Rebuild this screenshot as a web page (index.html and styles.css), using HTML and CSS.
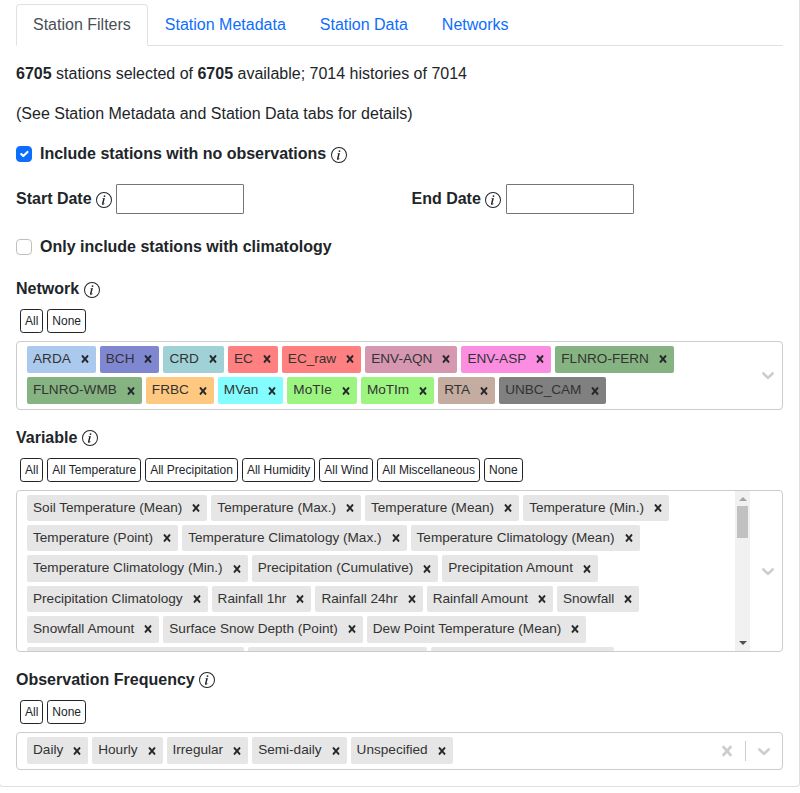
FILE: index.html
```html
<!DOCTYPE html>
<html lang="en">
<head>
<meta charset="utf-8">
<title>Station Filters</title>
<link rel="stylesheet" href="styles.css">
</head>
<body>
<svg class="sprite" width="0" height="0" aria-hidden="true">
  <symbol id="info" viewBox="0 0 16 16"><path d="M8 15A7 7 0 1 1 8 1a7 7 0 0 1 0 14zm0 1A8 8 0 1 0 8 0a8 8 0 0 0 0 16z"/><circle cx="8.5" cy="4.1" r=".95"/><path d="M6.1 6.4 8.9 6 7.6 11.3c-.15.7.3.7 1.2-.1l.2.3c-.8.9-1.5 1.3-2.2 1.3-.8 0-1-.6-.8-1.4l1-4c.1-.5 0-.6-.8-.7z"/></symbol>
  <symbol id="cross" viewBox="0 0 20 20"><path stroke="currentColor" stroke-width=".5" d="M14.348 14.849c-0.469 0.469-1.229 0.469-1.697 0l-2.651-3.030-2.651 3.029c-0.469 0.469-1.229 0.469-1.697 0-0.469-0.469-0.469-1.229 0-1.697l2.758-3.15-2.759-3.152c-0.469-0.469-0.469-1.228 0-1.697s1.228-0.469 1.697 0l2.652 3.031 2.651-3.031c0.469-0.469 1.228-0.469 1.697 0s0.469 1.229 0 1.697l-2.758 3.152 2.758 3.15c0.469 0.469 0.469 1.229 0 1.698z"/></symbol>
  <symbol id="chevron" viewBox="0 0 20 20"><path stroke="currentColor" stroke-width=".3" d="M4.516 7.548c0.436-0.446 1.043-0.481 1.576 0l3.908 3.747 3.908-3.747c0.533-0.481 1.141-0.446 1.574 0 0.436 0.445 0.408 1.197 0 1.615-0.406 0.418-4.695 4.502-4.695 4.502-0.217 0.223-0.502 0.335-0.787 0.335s-0.57-0.112-0.789-0.335c0 0-4.287-4.084-4.695-4.502s-0.436-1.17 0-1.615z"/></symbol>
</svg>
<main class="card">
  <nav class="tabs">
    <a class="tab active">Station Filters</a>
    <a class="tab">Station Metadata</a>
    <a class="tab">Station Data</a>
    <a class="tab">Networks</a>
  </nav>
  <p><b>6705</b> stations selected of <b>6705</b> available; 7014 histories of 7014</p>
  <p>(See Station Metadata and Station Data tabs for details)</p>
  <div class="check">
    <span class="box checked"><svg viewBox="0 0 20 20"><path d="m6 10 3 3 6-6"/></svg></span>
    <span class="label">Include stations with no observations <svg class="info"><use href="#info"/></svg></span>
  </div>
  <div class="dates">
    <div class="date"><span class="label">Start Date <svg class="info"><use href="#info"/></svg></span> <input type="text"></div>
    <div class="date"><span class="label">End Date <svg class="info"><use href="#info"/></svg></span> <input type="text"></div>
  </div>
  <div class="check">
    <span class="box"></span>
    <span class="label">Only include stations with climatology</span>
  </div>

  <section class="filter first">
    <div class="label">Network <svg class="info"><use href="#info"/></svg></div>
    <div class="buttons"><button>All</button><button>None</button></div>
    <div class="select">
      <div class="values">
        <span class="chip arda">ARDA<svg><use href="#cross"/></svg></span>
        <span class="chip bch">BCH<svg><use href="#cross"/></svg></span>
        <span class="chip crd">CRD<svg><use href="#cross"/></svg></span>
        <span class="chip ec">EC<svg><use href="#cross"/></svg></span>
        <span class="chip ec">EC_raw<svg><use href="#cross"/></svg></span>
        <span class="chip aqn">ENV-AQN<svg><use href="#cross"/></svg></span>
        <span class="chip asp">ENV-ASP<svg><use href="#cross"/></svg></span>
        <span class="chip flnro">FLNRO-FERN<svg><use href="#cross"/></svg></span>
        <span class="chip flnro">FLNRO-WMB<svg><use href="#cross"/></svg></span>
        <span class="chip frbc">FRBC<svg><use href="#cross"/></svg></span>
        <span class="chip mvan">MVan<svg><use href="#cross"/></svg></span>
        <span class="chip moti">MoTIe<svg><use href="#cross"/></svg></span>
        <span class="chip moti">MoTIm<svg><use href="#cross"/></svg></span>
        <span class="chip rta">RTA<svg><use href="#cross"/></svg></span>
        <span class="chip unbc">UNBC_CAM<svg><use href="#cross"/></svg></span>
        <span class="entry"></span>
      </div>
      <div class="indicators narrow"><svg><use href="#chevron"/></svg></div>
    </div>
  </section>

  <section class="filter">
    <div class="label">Variable <svg class="info"><use href="#info"/></svg></div>
    <div class="buttons"><button>All</button><button>All Temperature</button><button>All Precipitation</button><button>All Humidity</button><button>All Wind</button><button>All Miscellaneous</button><button>None</button></div>
    <div class="select tall">
      <div class="values">
        <span class="chip">Soil Temperature (Mean)<svg><use href="#cross"/></svg></span>
        <span class="chip">Temperature (Max.)<svg><use href="#cross"/></svg></span>
        <span class="chip">Temperature (Mean)<svg><use href="#cross"/></svg></span>
        <span class="chip">Temperature (Min.)<svg><use href="#cross"/></svg></span>
        <span class="chip">Temperature (Point)<svg><use href="#cross"/></svg></span>
        <span class="chip">Temperature Climatology (Max.)<svg><use href="#cross"/></svg></span>
        <span class="chip">Temperature Climatology (Mean)<svg><use href="#cross"/></svg></span>
        <span class="chip">Temperature Climatology (Min.)<svg><use href="#cross"/></svg></span>
        <span class="chip">Precipitation (Cumulative)<svg><use href="#cross"/></svg></span>
        <span class="chip">Precipitation Amount<svg><use href="#cross"/></svg></span>
        <span class="chip">Precipitation Climatology<svg><use href="#cross"/></svg></span>
        <span class="chip">Rainfall 1hr<svg><use href="#cross"/></svg></span>
        <span class="chip">Rainfall 24hr<svg><use href="#cross"/></svg></span>
        <span class="chip">Rainfall Amount<svg><use href="#cross"/></svg></span>
        <span class="chip">Snowfall<svg><use href="#cross"/></svg></span>
        <span class="chip">Snowfall Amount<svg><use href="#cross"/></svg></span>
        <span class="chip">Surface Snow Depth (Point)<svg><use href="#cross"/></svg></span>
        <span class="chip">Dew Point Temperature (Mean)<svg><use href="#cross"/></svg></span>
        <span class="chip cut-a"></span>
        <span class="chip cut-b"></span>
        <span class="chip cut-c"></span>
      </div>
      <div class="scrollbar"><i class="up"></i><i class="thumb"></i><i class="down"></i></div>
      <div class="indicators narrow"><svg><use href="#chevron"/></svg></div>
    </div>
  </section>

  <section class="filter">
    <div class="label">Observation Frequency <svg class="info"><use href="#info"/></svg></div>
    <div class="buttons"><button>All</button><button>None</button></div>
    <div class="select">
      <div class="values">
        <span class="chip">Daily<svg><use href="#cross"/></svg></span>
        <span class="chip">Hourly<svg><use href="#cross"/></svg></span>
        <span class="chip">Irregular<svg><use href="#cross"/></svg></span>
        <span class="chip">Semi-daily<svg><use href="#cross"/></svg></span>
        <span class="chip">Unspecified<svg><use href="#cross"/></svg></span>
        <span class="entry"></span>
      </div>
      <div class="indicators"><svg><use href="#cross"/></svg><span class="separator"></span><svg><use href="#chevron"/></svg></div>
    </div>
  </section>
</main>
</body>
</html>
```
FILE: styles.css
```css
* { box-sizing: border-box; }
body {
  margin: 0;
  height: 793px;
  overflow: hidden;
  background: #fff;
  color: #212529;
  font: 16px/24px "Liberation Sans", Arial, sans-serif;
}
.sprite { display: none; }
svg { fill: currentColor; flex: none; }
.card {
  width: 801px;
  height: 787px;
  margin-left: -1px;
  padding: 4px 16px 0;
  border: 1px solid #dfdfdf;
  border-top: 0;
  border-radius: 0 0 4px 4px;
}
.tabs { display: flex; height: 42px; border-bottom: 1px solid #dee2e6; }
.tab {
  height: 42px;
  padding: 8px 16px;
  border: 1px solid transparent;
  border-radius: 4px 4px 0 0;
  line-height: 24px;
  color: #0d6efd;
}
.tab.active { color: #495057; background: #fff; border-color: #dee2e6 #dee2e6 #fff; }
p { margin: 16px 0; }
.label { font-weight: 700; }
.info { width: 16px; height: 16px; vertical-align: -3.5px; }
.check { display: flex; gap: 8px; height: 24px; }
.box {
  width: 16px;
  height: 16px;
  margin-top: 4px;
  border: 1px solid #bfbfbf;
  border-radius: 4px;
}
.box svg { display: block; width: 14px; height: 14px; fill: none; stroke: #fff; stroke-width: 3; stroke-linecap: round; stroke-linejoin: round; }
.box.checked { border-color: #0d6efd; background: #0d6efd; }
.dates { display: flex; height: 30px; margin: 18px 0 21px; }
.date { width: 395.5px; flex: none; white-space: nowrap; }
.date:last-child { width: 371.5px; }
.date input {
  width: 128px;
  height: 30px;
  margin: 0;
  padding: 1px 2px;
  border: 1px solid #767676;
  border-radius: 1px;
  font: inherit;
}
.filter { margin-top: 16px; }
.filter.first { margin-top: 18.17px; }
.filter .label { height: 24px; }
.buttons { display: flex; gap: 4px; margin: 8px 0 8px 4px; }
button {
  height: 24px;
  padding: 0 4px;
  border: 1px solid #212529;
  border-radius: 3.2px;
  background: #fff;
  color: #212529;
  font: 12px/18px "Liberation Sans", Arial, sans-serif;
}
.select { display: flex; border: 1px solid #ccc; border-radius: 4px; background: #fff; }
.select.tall { height: 162px; }
.values {
  display: flex;
  flex: 1;
  flex-wrap: wrap;
  align-items: center;
  align-content: flex-start;
  padding: 2px 8px;
  overflow: hidden;
}
.chip {
  display: flex;
  align-items: center;
  height: 26.4px;
  margin: 2px;
  padding: 0 4px 0 6px;
  border-radius: 2px;
  background: #e6e6e6;
  color: #333;
  font-size: 13.6px;
  line-height: 20.4px;
  white-space: nowrap;
}
.chip svg { width: 14px; height: 14px; margin-left: 7px; color: #212529; }
.entry { width: 2px; height: 32px; }
.arda { background: #abc8ed; }
.bch { background: #8087d1; }
.crd { background: #a0d1d7; }
.ec { background: #ff8080; }
.aqn { background: #d698b0; }
.asp { background: #fc8ee2; }
.flnro { background: #86b382; }
.frbc { background: #ffc880; }
.mvan { background: #84fdff; }
.moti { background: #9cf580; }
.rta { background: #c4aca0; }
.unbc { background: #808080; }
.cut-a { width: 217px; }
.cut-b { width: 179px; }
.cut-c { width: 183px; }
.indicators { display: flex; align-items: center; color: #ccc; }
.indicators svg { width: 20px; height: 20px; margin: 8px; }
.indicators.narrow svg { margin-right: 4px; }
.separator { width: 1px; align-self: stretch; margin: 8px 0; background: #ccc; }
.scrollbar { display: flex; flex-direction: column; align-items: center; width: 15px; background: #f1f1f1; }
.up, .down { border: solid transparent; border-width: 0 4px; }
.up { margin-top: 6px; border-bottom: 4px solid #a3a3a3; }
.thumb { width: 11px; height: 32px; margin-top: 5px; background: #c1c1c1; }
.down { margin: auto 0 6px; border-top: 4px solid #505050; }
```
